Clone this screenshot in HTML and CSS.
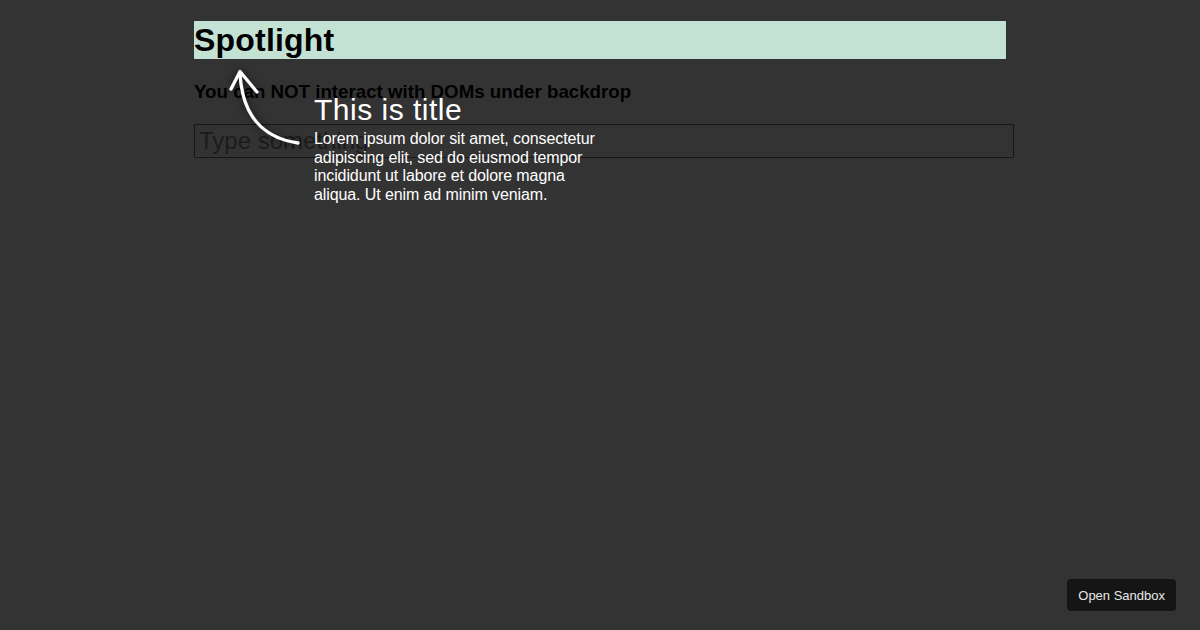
FILE: index.html
```html
<!DOCTYPE html>
<html lang="en">
<head>
<meta charset="utf-8">
<title>Spotlight</title>
<link rel="stylesheet" href="styles.css">
</head>
<body>
<div class="page">
  <h1 class="spot">Spotlight</h1>
  <h3 class="note">You can NOT interact with DOMs under backdrop</h3>
  <input class="field" type="text" placeholder="Type something">

  <svg class="arrow" width="90" height="90" viewBox="0 0 90 90" fill="none" stroke="#fff" stroke-width="3.3" stroke-linecap="round" stroke-linejoin="round">
    <path d="M78 83 Q23 75 20 13"/>
    <path d="M11 29 L20 11.5 L37 32"/>
  </svg>

  <div class="tip">
    <div class="tip-title">This is title</div>
    <div class="tip-body">Lorem ipsum dolor sit amet, consectetur adipiscing elit, sed do eiusmod tempor incididunt ut labore et dolore magna aliqua. Ut enim ad minim veniam.</div>
  </div>
</div>
<button class="sandbox">Open Sandbox</button>
</body>
</html>
```
FILE: styles.css
```css
html, body {
  margin: 0;
  height: 100%;
  overflow: hidden;
  background: #ffffff;
  font-family: "Liberation Sans", Arial, sans-serif;
}

.page {
  position: relative;
  width: 812px;
  margin: 0 auto;
  padding-top: 21.44px;
}

.spot {
  position: relative;
  z-index: 1;
  margin: 0 0 21.44px;
  font-size: 32px;
  font-weight: bold;
  line-height: 38px;
  letter-spacing: 0.2px;
  color: #000;
  background: #c3e2d4;
  box-shadow: 0 0 0 2400px rgba(0, 0, 0, 0.8);
}

.note {
  margin: 0 0 21.5px;
  font-size: 18.72px;
  font-weight: bold;
  line-height: 22px;
  color: #000;
}

.field {
  display: block;
  box-sizing: border-box;
  width: calc(100% + 8px);
  margin: 0;
  padding: 2px 4px;
  border: 1px solid #767676;
  font-family: "Liberation Sans", Arial, sans-serif;
  font-size: 24px;
  line-height: normal;
  background: #fff;
  color: #000;
}

.field::placeholder {
  color: #8a8a8a;
}

.arrow {
  position: absolute;
  z-index: 2;
  left: 26px;
  top: 60px;
  filter: drop-shadow(0 0 4px rgba(0, 0, 0, 0.6));
}

.tip {
  position: absolute;
  z-index: 2;
  left: 120px;
  top: 92px;
  width: 300px;
  color: #fff;
}

.tip-title {
  margin: 0 0 3.2px;
  font-size: 30px;
  line-height: 35px;
  letter-spacing: 0.5px;
}

.tip-body {
  font-size: 16px;
  line-height: 18.5px;
  letter-spacing: -0.1px;
}

.sandbox {
  position: fixed;
  z-index: 2;
  right: 24px;
  bottom: 19px;
  height: 32px;
  padding: 0 11px;
  border: 0;
  border-radius: 4px;
  background: #151515;
  color: #e8e8e8;
  font-family: "Liberation Sans", Arial, sans-serif;
  font-size: 13px;
}
```
